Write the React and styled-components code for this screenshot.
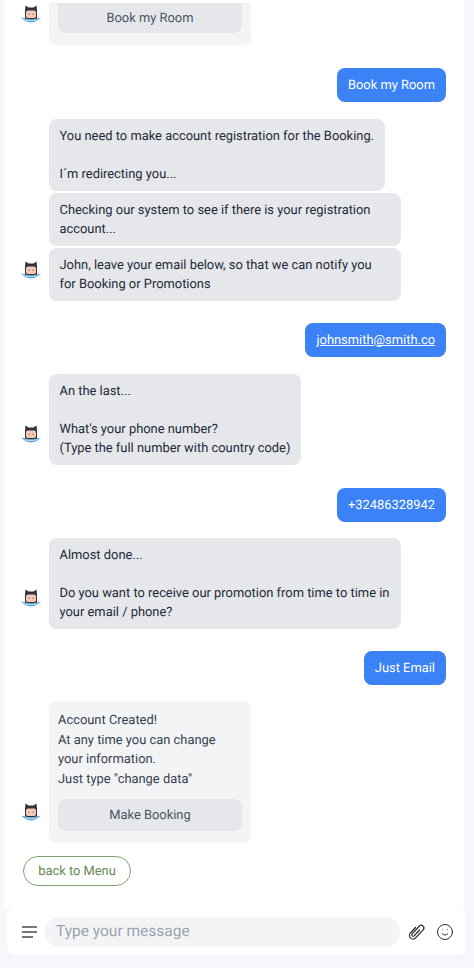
import React from "react";
import styled, { createGlobalStyle } from "styled-components";
import { Smile } from "lucide-react";

const Global = createGlobalStyle`
  html, body { margin: 0; padding: 0; height: 968px; overflow: hidden; background: #f5f7fd; }
  * { box-sizing: border-box; }
  body { font-family: Roboto, "Liberation Sans", sans-serif; text-rendering: geometricPrecision; }
  button { text-rendering: geometricPrecision; }
`;

const Page = styled.div`
  width: 474px;
  height: 968px;
  display: flex;
  flex-direction: column;
  background: #f5f7fd;
`;

const Thread = styled.div`
  height: 908px;
  width: 460px;
  margin-left: 4px;
  background: #fff;
  overflow: hidden;
  display: flex;
  flex-direction: column;
  justify-content: flex-end;
  padding: 0 18px 22px 17px;
  flex-shrink: 0;
`;

const Row = styled.div`
  display: flex;
  flex-shrink: 0;
  justify-content: ${(p) => (p.$out ? "flex-end" : "flex-start")};
  margin-top: ${(p) => p.$top || 0}px;
`;

const AvatarSlot = styled.div`
  width: 28px;
  flex-shrink: 0;
  display: flex;
  align-items: flex-end;
  padding-bottom: 21px;
`;

const Stack = styled.div`
  display: flex;
  flex-direction: column;
  align-items: flex-start;
  gap: 2px;
`;

const Bubble = styled.div`
  background: #e5e7eb;
  color: #1f2937;
  border-radius: 8px;
  padding: 7.5px 10.5px;
  font-size: 12.9px;
  line-height: 19px;
  width: ${(p) => p.$w}px;
`;

const Outgoing = styled.div`
  background: #3b82f6;
  color: #fff;
  border-radius: 8px;
  padding: 7.5px 11px;
  font-size: 12.9px;
  line-height: 19px;
  white-space: nowrap;
`;

const MailLink = styled.span`
  text-decoration: underline;
`;

const Card = styled.div`
  width: 202px;
  background: #f3f4f6;
  border-radius: ${(p) => (p.$clipped ? "0 0 8px 8px" : "8px")};
  padding: ${(p) => (p.$clipped ? "0 9px 12px" : "10px 9px 12px")};
  color: #374151;
  font-size: 12.9px;
  line-height: 19.5px;
`;

const CardButton = styled.button`
  display: block;
  width: 184px;
  height: ${(p) => (p.$clipped ? 30 : 32)}px;
  margin-top: ${(p) => (p.$clipped ? 0 : 10)}px;
  border: 0;
  border-radius: ${(p) => (p.$clipped ? "0 0 8px 8px" : "8px")};
  background: #e5e7eb;
  color: #4b5563;
  font: 400 12.9px/19px Roboto, "Liberation Sans", sans-serif;
`;

const MenuPill = styled.button`
  width: 108px;
  height: 30px;
  margin: 13px 0 0 2px;
  flex-shrink: 0;
  border: 1px solid #7fa26f;
  border-radius: 15px;
  background: #fff;
  color: #5f8a4c;
  font: 400 12.9px Roboto, "Liberation Sans", sans-serif;
  padding: 0;
`;

const Composer = styled.div`
  width: 459px;
  height: 47px;
  margin-left: 7px;
  padding: 0 12px 0 15px;
  background: #fff;
  border-radius: 8px;
  display: flex;
  align-items: center;
  flex-shrink: 0;
`;

const MenuIcon = styled.svg`
  width: 16px;
  height: 14px;
  flex-shrink: 0;
  margin-right: 7px;
`;

const Field = styled.div`
  flex: 1;
  height: 30px;
  border-radius: 15px;
  background: #f3f4f6;
  color: #9ca3af;
  font-size: 15.5px;
  line-height: 29px;
  padding-left: 11px;
`;

const IconButton = styled.span`
  display: flex;
  color: #27272a;
  margin-left: ${(p) => p.$left}px;
`;

const Avatar = () => (
  <svg width="20" height="20" viewBox="0 0 20 20">
    <path d="M0 13.500c4 1.500 16 1.500 20 0-2.500 2.500-6 5-10 5s-7.500-2.500-10-5z" fill="#5aa6dc" />
    <path d="M3 15c3 .8 11 .8 14 0l-3 2H6z" fill="#a9d6f2" />
    <path d="M4.500 1.500l3 2h5l3-2 .5 5v8c-3 1-9 1-12 0v-8z" fill="#333338" />
    <rect x="5" y="6.500" width="10" height="7.500" rx="2" fill="#f5c9b6" />
    <circle cx="8" cy="10" r=".6" fill="#4a3a3a" />
    <circle cx="12" cy="10" r=".6" fill="#4a3a3a" />
  </svg>
);

const Incoming = ({ top, children }) => (
  <Row $top={top}>
    <AvatarSlot><Avatar /></AvatarSlot>
    <Stack>{children}</Stack>
  </Row>
);

export default function App() {
  return (
    <Page>
      <Global />
      <Thread>
        <Incoming>
          <Card $clipped>
            <CardButton $clipped>Book my Room</CardButton>
          </Card>
        </Incoming>
        <Row $out $top={23}><Outgoing>Book my Room</Outgoing></Row>
        <Incoming top={17}>
          <Bubble $w={336}>You need to make account registration for the Booking.<br /><br />I´m redirecting you...</Bubble>
          <Bubble $w={352}>Checking our system to see if there is your registration account...</Bubble>
          <Bubble $w={352}>John, leave your email below, so that we can notify you for Booking or Promotions</Bubble>
        </Incoming>
        <Row $out $top={22}><Outgoing><MailLink>johnsmith@smith.co</MailLink></Outgoing></Row>
        <Incoming top={17}>
          <Bubble $w={252}>An the last...<br /><br />What's your phone number?<br />(Type the full number with country code)</Bubble>
        </Incoming>
        <Row $out $top={23}><Outgoing>+32486328942</Outgoing></Row>
        <Incoming top={16}>
          <Bubble $w={352}>Almost done...<br /><br />Do you want to receive our promotion from time to time in your email / phone?</Bubble>
        </Incoming>
        <Row $out $top={22}><Outgoing>Just Email</Outgoing></Row>
        <Incoming top={16}>
          <Card>
            Account Created!<br />At any time you can change your information.<br />Just type "change data"
            <CardButton>Make Booking</CardButton>
          </Card>
        </Incoming>
        <MenuPill>back to Menu</MenuPill>
      </Thread>
      <Composer>
        <MenuIcon viewBox="0 0 16 14">
          <path d="M0 2h15M0 7h15M0 12h11" stroke="#4b4b4f" strokeWidth="1.600" fill="none" />
        </MenuIcon>
        <Field>Type your message</Field>
        <IconButton $left={8}>
          <svg width="18" height="18" viewBox="0 0 18 18" fill="none" stroke="currentColor" strokeWidth="1.200" strokeLinecap="round" strokeLinejoin="round">
            <path d="M11.500 7 6.200 12.800a1.400 1.400 0 0 1-2-2l7.200-7.800a2.700 2.700 0 0 1 3.900 3.700l-7.600 8.200a3.600 3.600 0 0 1-5.300-4.900L7.500 4.500" />
          </svg>
        </IconButton>
        <IconButton $left={10}><Smile size={18} strokeWidth={1.300} /></IconButton>
      </Composer>
    </Page>
  );
}
